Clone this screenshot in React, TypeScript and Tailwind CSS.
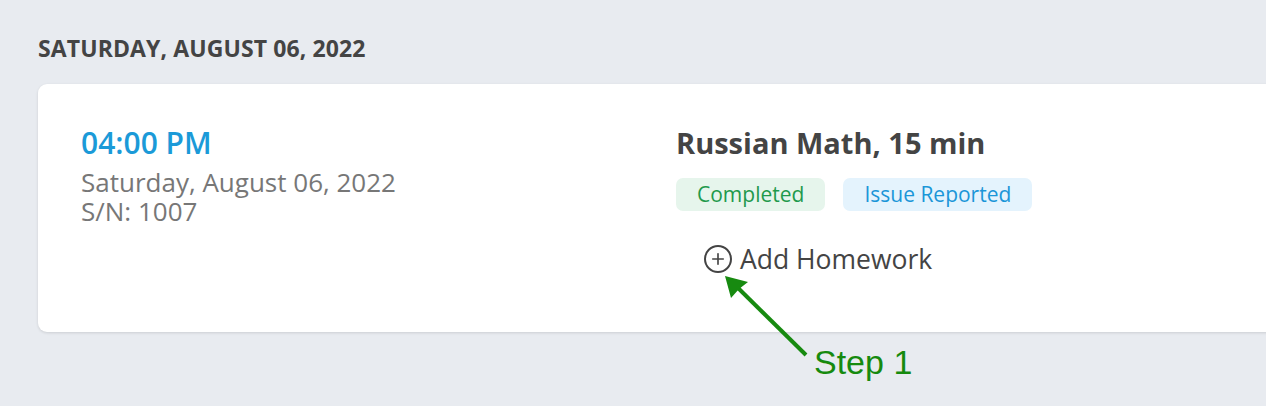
import { Plus } from 'lucide-react'

function Badge({ label, tone }: { label: string; tone: 'green' | 'blue' }) {
  const cls =
    tone === 'green'
      ? 'bg-[#e6f5ec] text-[#1f9a4c]'
      : 'bg-[#e4f3fd] text-[#1b96d8]'
  return (
    <span className={`inline-flex h-[33px] items-center rounded-[7px] px-[21px] text-[21px] ${cls}`}>
      {label}
    </span>
  )
}

export default function App() {
  return (
    <div
      className="relative h-[406px] w-full overflow-hidden bg-[#e8ebf0] pl-[38px] pt-[32px]"
      style={{ fontFamily: '"Open Sans", sans-serif' }}
    >
      <h2 className="text-[23px] font-bold leading-[33px] tracking-[0.1px] text-[#444444]">
        SATURDAY, AUGUST 06, 2022
      </h2>

      <div className="mt-[19px] mr-[-40px] flex h-[248px] rounded-l-[9px] bg-white shadow-[0_1px_3px_rgba(0,0,0,0.12)]">
        <div className="w-[638px] shrink-0 pl-[43px] pt-[40px]">
          <div className="text-[30px] font-semibold leading-[38px] text-[#1b9ad8]">04:00 PM</div>
          <div className="mt-[5px] text-[26px] leading-[30px] text-[#777777]">Saturday, August 06, 2022</div>
          <div className="text-[26px] leading-[29px] text-[#777777]">S/N: 1007</div>
        </div>

        <div className="pt-[40px]">
          <div className="text-[29px] font-bold leading-[38px] text-[#444444]">Russian Math, 15 min</div>
          <div className="mt-[16px] flex gap-[18px]">
            <Badge label="Completed" tone="green" />
            <Badge label="Issue Reported" tone="blue" />
          </div>
          <button className="mt-[33px] ml-[28px] flex items-center gap-[8px] text-[26.5px] leading-[30px] text-[#444444]">
            <span className="flex h-[28px] w-[28px] items-center justify-center rounded-full border-[2px] border-[#444444]">
              <Plus className="h-[18px] w-[18px]" strokeWidth={2.2} />
            </span>
            Add Homework
          </button>
        </div>
      </div>

      {/* annotation overlay */}
      <svg className="absolute left-0 top-0" width="1266" height="406" viewBox="0 0 1266 406">
        <line x1="806" y1="355" x2="733" y2="283" stroke="#178a10" strokeWidth="4" />
        <polygon points="725,276 748,282 739,289 731,298" fill="#178a10" />
      </svg>
      <div
        className="absolute left-[814px] top-[342px] text-[34px] leading-[40px] text-[#168a0e]"
        style={{ fontFamily: '"Liberation Sans", Arial, sans-serif' }}
      >
        Step 1
      </div>
    </div>
  )
}
